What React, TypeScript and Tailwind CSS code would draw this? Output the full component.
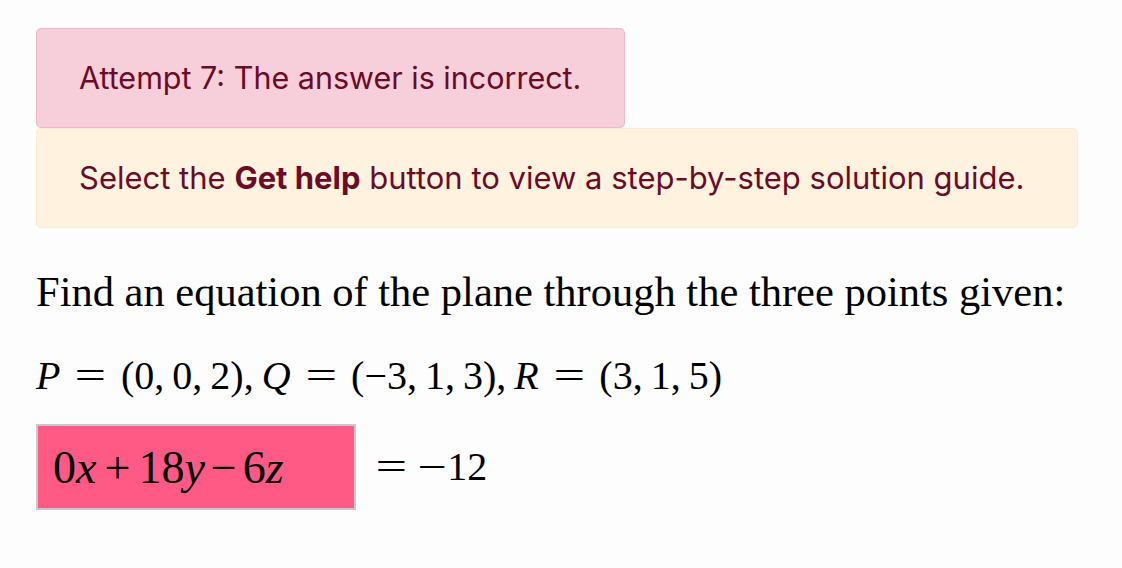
const sans = { fontFamily: "Inter, 'Noto Sans', sans-serif" }

function Rel({ children }: { children: React.ReactNode }) {
  return <span className="mx-[19px] inline-block scale-x-[1.4]">{children}</span>
}

function Sep() {
  return <span className="ml-[8px] inline-block" />
}

function MathLine() {
  return (
    <div className="font-['Liberation_Serif',serif] text-[40px] leading-none text-black">
      <span className="italic">P</span>
      <Rel>=</Rel>(0,<Sep />0,<Sep />2),<Sep />
      <span className="italic">Q</span>
      <Rel>=</Rel>(−3,<Sep />1,<Sep />3),<Sep />
      <span className="italic">R</span>
      <Rel>=</Rel>(3,<Sep />1,<Sep />5)
    </div>
  )
}

export default function App() {
  return (
    <div className="min-h-screen w-full bg-[#fdfdfd] px-[36px] pt-[28px]">
      <div style={sans} className="flex flex-col">
        <div className="w-[589px] rounded-[5px] border border-[#f1b7c8] bg-[#f6cfda] px-[42px] py-[33px] text-[30.5px] leading-[32px] text-[#6d0a25]">
          Attempt 7: The answer is incorrect.
        </div>
        <div className="w-[1042px] rounded-[5px] border border-[#feebcf] bg-[#fff2df] px-[42px] py-[33px] text-[31px] leading-[32px] text-[#6d0a25]">
          Select the <b className="font-bold">Get help</b> button to view a step-by-step solution guide.
        </div>
      </div>
      <p className="mt-[38px] font-['Liberation_Serif',serif] text-[42.5px] leading-[52px] text-black">
        Find an equation of the plane through the three points given:
      </p>
      <div className="mt-[38px]">
        <MathLine />
      </div>
      <div className="mt-[28px] flex items-center">
        <div className="flex h-[86px] w-[320px] items-center border-2 border-[#c8c8c8] bg-[#ff5a85] px-[15px] font-['Liberation_Serif',serif] text-[46px] text-black">
          0<span className="italic">x</span>
          <span className="mx-[8px]">+</span>18<span className="italic">y</span>
          <span className="mx-[6px]">−</span>6<span className="italic">z</span>
        </div>
        <div className="ml-[24px] font-['Liberation_Serif',serif] text-[40px] text-black">
          <span className="mr-[18px] inline-block scale-x-[1.4]">=</span>
          <span className="inline-block scale-x-[1.3]">−</span>
          <span className="ml-[4px]">12</span>
        </div>
      </div>
    </div>
  )
}
